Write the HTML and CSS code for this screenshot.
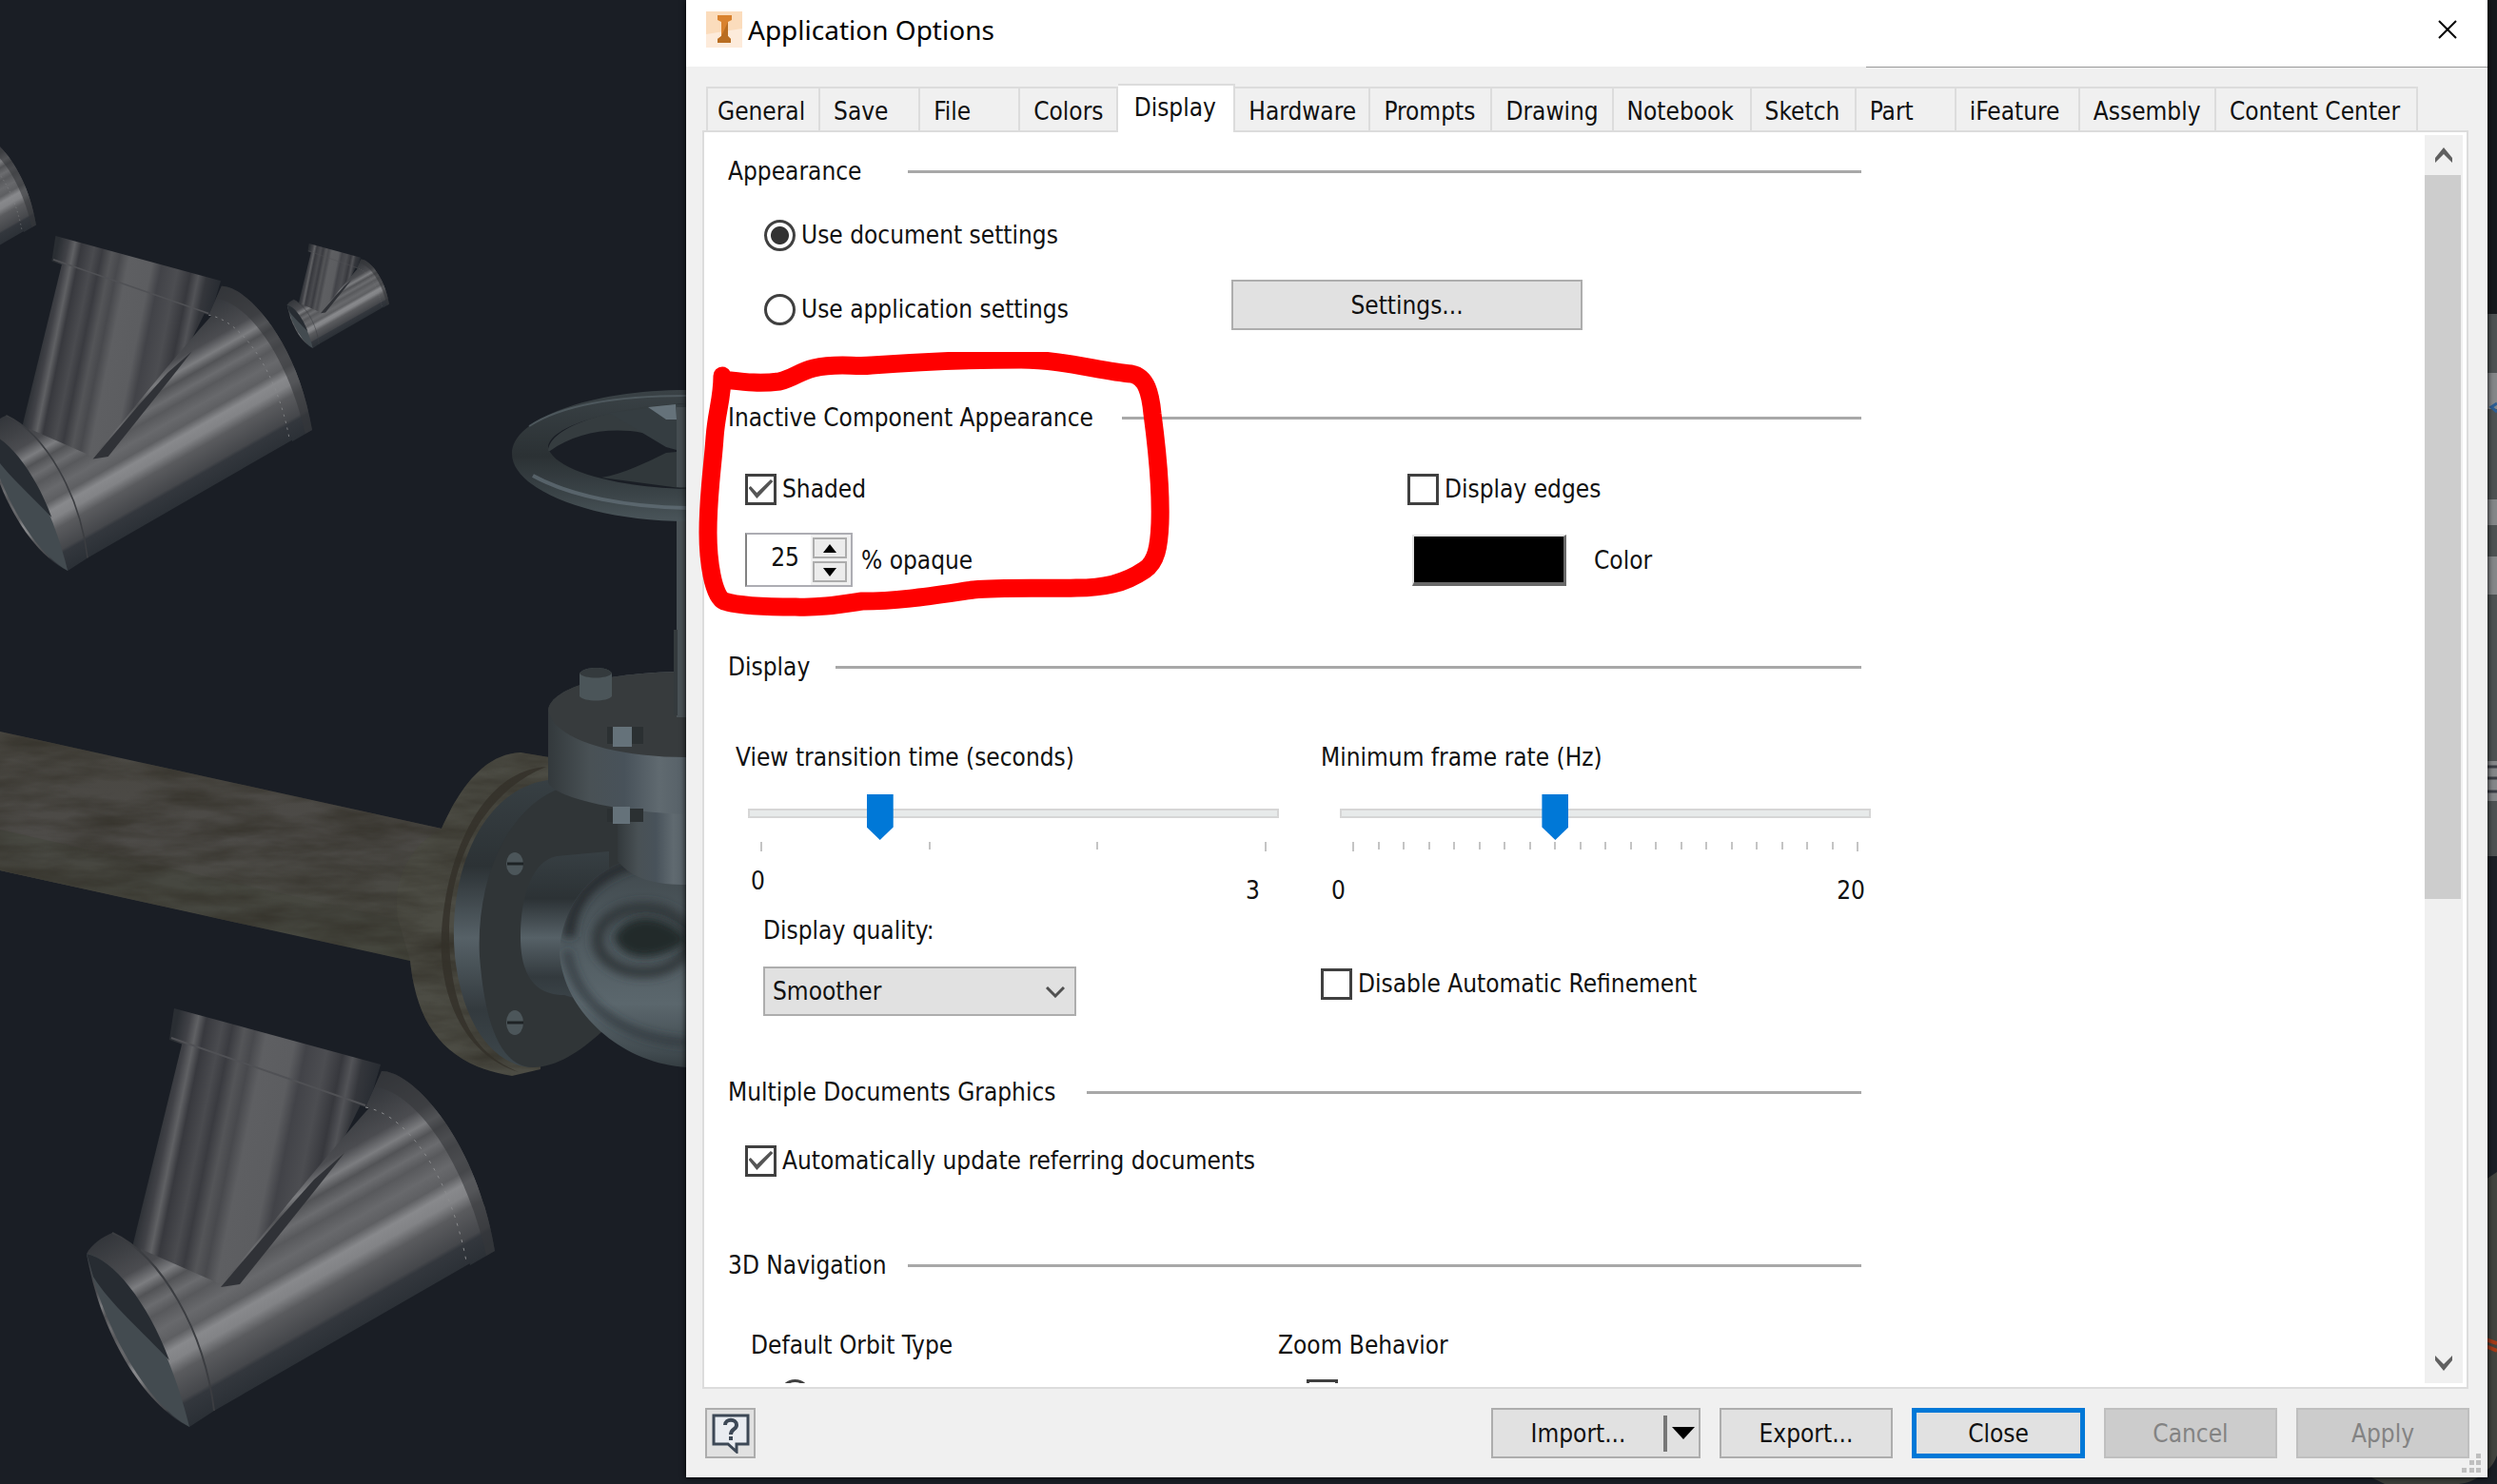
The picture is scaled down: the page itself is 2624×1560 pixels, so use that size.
FILE: index.html
```html
<!DOCTYPE html>
<html lang="en">
  <head>
    <meta charset="UTF-8" />
    <meta name="viewport" content="width=device-width, initial-scale=1.0" />
    <title>Application Options</title>
    <link rel="stylesheet" href="styles.css">
  </head>
  <body>
    <!-- 3D model view behind the dialog -->
    <svg class="scene" viewBox="0 0 2624 1560" preserveAspectRatio="xMinYMin slice" aria-hidden="true">
      <defs>
        <linearGradient id="run" gradientUnits="userSpaceOnUse" x1="290" y1="1190" x2="400" y2="1384">
          <stop offset="0" stop-color="#303338"></stop>
          <stop offset="0.14" stop-color="#3f4145"></stop>
          <stop offset="0.24" stop-color="#4b4c50"></stop>
          <stop offset="0.31" stop-color="#7c7d80"></stop>
          <stop offset="0.36" stop-color="#525356"></stop>
          <stop offset="0.42" stop-color="#6b6c6f"></stop>
          <stop offset="0.47" stop-color="#58595c"></stop>
          <stop offset="0.54" stop-color="#68696c"></stop>
          <stop offset="0.6" stop-color="#5e5f62"></stop>
          <stop offset="0.65" stop-color="#88898c"></stop>
          <stop offset="0.7" stop-color="#828386"></stop>
          <stop offset="0.76" stop-color="#5a5b5e"></stop>
          <stop offset="0.88" stop-color="#45474b"></stop>
          <stop offset="0.9" stop-color="#33373d"></stop>
          <stop offset="1" stop-color="#2b3036"></stop>
        </linearGradient>
        <linearGradient id="branch" gradientUnits="userSpaceOnUse" x1="160" y1="1200" x2="373" y2="1243">
          <stop offset="0" stop-color="#2a2e33"></stop>
          <stop offset="0.06" stop-color="#414247"></stop>
          <stop offset="0.1" stop-color="#606164"></stop>
          <stop offset="0.14" stop-color="#38393e"></stop>
          <stop offset="0.22" stop-color="#4a4b4f"></stop>
          <stop offset="0.27" stop-color="#3a3b40"></stop>
          <stop offset="0.33" stop-color="#545558"></stop>
          <stop offset="0.38" stop-color="#48494d"></stop>
          <stop offset="0.44" stop-color="#5e5f62"></stop>
          <stop offset="0.58" stop-color="#5c5d60"></stop>
          <stop offset="0.64" stop-color="#424348"></stop>
          <stop offset="0.74" stop-color="#4c4d51"></stop>
          <stop offset="0.82" stop-color="#37383d"></stop>
          <stop offset="0.87" stop-color="#525357"></stop>
          <stop offset="0.92" stop-color="#34363b"></stop>
          <stop offset="1" stop-color="#292d33"></stop>
        </linearGradient>
        <linearGradient id="rust" x1="0" y1="0" x2="0" y2="1">
          <stop offset="0" stop-color="#484640"></stop>
          <stop offset="0.45" stop-color="#4d4b48"></stop>
          <stop offset="1" stop-color="#45463d"></stop>
        </linearGradient>
        <linearGradient id="steel" x1="0" y1="0" x2="1" y2="0">
          <stop offset="0" stop-color="#33393c"></stop>
          <stop offset="0.3" stop-color="#495155"></stop>
          <stop offset="0.55" stop-color="#48525a"></stop>
          <stop offset="0.8" stop-color="#606a70"></stop>
          <stop offset="1" stop-color="#566067"></stop>
        </linearGradient>
        <linearGradient id="wheel" x1="0" y1="0" x2="0" y2="1">
          <stop offset="0" stop-color="#3a4246"></stop>
          <stop offset="0.5" stop-color="#2b3134"></stop>
          <stop offset="0.8" stop-color="#3b4448"></stop>
          <stop offset="1" stop-color="#4a555a"></stop>
        </linearGradient>
        <linearGradient id="rim" x1="0" y1="0" x2="0" y2="1">
          <stop offset="0" stop-color="#373f43"></stop>
          <stop offset="0.3" stop-color="#2c3235"></stop>
          <stop offset="0.55" stop-color="#566167"></stop>
          <stop offset="0.8" stop-color="#333a3e"></stop>
          <stop offset="1" stop-color="#3d474c"></stop>
        </linearGradient>
        <linearGradient id="ball" x1="0" y1="0" x2="0" y2="1">
          <stop offset="0" stop-color="#3b4347"></stop>
          <stop offset="0.3" stop-color="#4a5459"></stop>
          <stop offset="0.7" stop-color="#5b676d"></stop>
          <stop offset="0.9" stop-color="#424c51"></stop>
          <stop offset="1" stop-color="#2f373b"></stop>
        </linearGradient>
        <filter id="soft" x="-0.5" y="-0.5" width="2" height="2">
          <feGaussianBlur stdDeviation="5"></feGaussianBlur>
        </filter>
        <clipPath id="body">
          <path d="M722 892 C640 895 592 935 588 1000 C590 1060 650 1118 722 1122 Z"></path>
        </clipPath>
        <filter id="grain" x="0" y="0" width="1" height="1" color-interpolation-filters="sRGB">
          <feTurbulence type="fractalNoise" baseFrequency="0.012 0.05" numOctaves="4" seed="7"></feTurbulence>
          <feColorMatrix values="0 0 0 0 0.2  0 0 0 0 0.19  0 0 0 0 0.16  1.6 0 0 0 -0.5"></feColorMatrix>
          <feComposite in2="SourceGraphic" operator="in"></feComposite>
        </filter>
        <g id="wye">
          <path d="M139 1311 L192 1094 L380 1159 L345 1230 L232 1356 Z" fill="url(#branch)"></path>
          <path d="M183 1060 L400 1119 L392 1146 L384 1164 L178 1093 Z" fill="url(#branch)"></path>
          <path d="M180 1091 L384 1162" stroke="#505155" stroke-width="2" fill="none"></path>
          <path d="M148 1313 L232 1350 C285 1290 320 1240 401 1150 C440 1172 480 1240 494 1328 L225 1483 L150 1400 Z" fill="url(#run)"></path>
          <path d="M232 1353 L290 1285 L330 1240 L362 1212 L336 1245 L252 1350 Z" fill="#303237"></path>
          <path d="M401 1126 C432 1125 500 1195 520 1315 L494 1330 C478 1250 430 1170 384 1164 Z" fill="url(#run)"></path>
          <path d="M401 1126 C432 1125 500 1195 520 1315 L511 1320 C490 1225 440 1150 394 1142 Z" fill="#35373b" opacity="0.6"></path>
          <path d="M384 1164 C430 1172 474 1240 490 1326" stroke="#8c8d8f" stroke-width="1" stroke-dasharray="3 6" fill="none"></path>
          <path d="M91 1318 C96 1308 108 1300 118 1296 C170 1320 215 1400 225 1483 L199 1500 C150 1476 105 1400 91 1318 Z" fill="url(#run)"></path>
          <path d="M118 1296 C170 1320 215 1400 225 1483" stroke="#3b3d41" stroke-width="2" fill="none"></path>
          <path d="M91 1318 C120 1322 172 1390 199 1500 C155 1476 110 1400 91 1318 Z" fill="#434b50"></path>
          <path d="M91 1318 C118 1323 155 1368 178 1430 C150 1400 115 1370 98 1342 Z" fill="#272c32"></path>
        </g>
      </defs>

      <use href="#wye"></use>
      <use href="#wye" transform="translate(-88 -600) scale(0.8)"></use>
      <use href="#wye" transform="translate(279 -9) scale(0.25)"></use>
      <use href="#wye" transform="translate(-222 -421) scale(0.5)"></use>

      <!-- rusty pipe and flange -->
      <path d="M0 769 L464 871 L440 1012 L0 915 Z" fill="url(#rust)"></path>
      <path d="M0 872 L440 972 L435 1010 L0 915 Z" fill="#45463d" opacity="0.6"></path>
      <path d="M577 796 L547 791 C505 793 480 835 464 871 C430 890 412 925 418 965 L431 1010 C438 1080 470 1120 538 1131 L568 1124 Z" fill="#4c4c44"></path>
      <path d="M574 806 C500 835 455 930 478 1040 C490 1090 510 1112 545 1127 C490 1110 460 1050 464 980 C470 890 510 810 574 806 Z" fill="#38352e"></path>
      <g filter="url(#grain)">
        <path d="M0 769 L464 871 L440 1012 L0 915 Z"></path>
        <path d="M577 796 L547 791 C505 793 480 835 464 871 C430 890 412 925 418 965 L431 1010 C438 1080 470 1120 538 1131 L568 1124 Z"></path>
      </g>

      <!-- valve -->
      <path d="M576 820 C505 830 470 920 478 1005 C486 1080 520 1118 556 1122 L640 1060 V820 Z" fill="url(#rim)"></path>
      <path d="M590 828 C530 850 500 930 504 1005 C510 1085 530 1122 560 1122 C585 1122 610 1105 632 1085 L722 1060 V820 Z" fill="#303537"></path>
      <ellipse cx="541" cy="908" rx="9" ry="12" fill="#4c565a"></ellipse>
      <ellipse cx="541" cy="1075" rx="9" ry="13" fill="#4c565a"></ellipse>
      <path d="M533 908 H550 M533 1075 H550" stroke="#1e2325" stroke-width="3"></path>
      <path d="M585 900 C560 905 547 940 547 985 C547 1025 562 1046 593 1046 L640 1060 V895 Z" fill="url(#rim)"></path>
      <g clip-path="url(#body)">
        <path d="M580 880 H722 V1130 H580 Z" fill="url(#ball)"></path>
        <path d="M598 985 C600 930 650 900 722 900" fill="none" stroke="#262c2f" stroke-width="12" filter="url(#soft)"></path>
        <ellipse cx="676" cy="988" rx="48" ry="34" fill="none" stroke="#30373b" stroke-width="12" filter="url(#soft)"></ellipse>
        <path d="M722 986 C700 960 660 955 645 985 C655 1015 695 1010 722 990 Z" fill="#23292c" filter="url(#soft)"></path>
        <path d="M596 1000 C606 1060 660 1092 722 1096" fill="none" stroke="#2c3337" stroke-width="6" filter="url(#soft)"></path>
      </g>
      <path d="M649 850 H722 V930 C690 930 665 925 649 905 Z" fill="url(#steel)"></path>
      <path d="M576 746 C580 722 640 706 722 706 V856 C650 854 580 838 576 822 Z" fill="url(#steel)"></path>
      <path d="M576 746 C580 722 640 706 722 706 V796 C640 796 580 775 576 746 Z" fill="#373b3d"></path>
      <path d="M609 708 C613 700 640 700 643 708 V732 C638 738 614 738 609 732 Z" fill="#4b5559"></path>
      <path d="M609 708 C613 700 640 700 643 708 C638 714 614 714 609 708 Z" fill="#343a3d"></path>
      <path d="M638 764 H676 V782 H638 Z M638 850 H676 V864 H638 Z" fill="#2b3032"></path>
      <path d="M644 764 H664 V785 H644 Z M644 848 H662 V866 H644 Z" fill="#65727a"></path>
      <path d="M711 540 H722 V754 H711 Z" fill="#4a5256"></path>
      <path d="M708 662 H712 V752 H708 Z" fill="#343a3d"></path>
      <!-- hand wheel, cut off by the dialog -->
      <path fill-rule="evenodd" d="M722 410 C620 410 538 440 538 477 C538 514 620 548 722 548 Z M722 424 C640 430 578 448 576 470 C580 492 640 512 722 514 Z" fill="url(#wheel)"></path>
      <path d="M576 474 C578 448 640 428 722 424 V450 L700 462 C660 446 610 450 578 474 Z" fill="#353c3f"></path>
      <path d="M722 474 V514 L632 502 C655 498 680 486 700 476 Z" fill="#31383b"></path>
      <path d="M640 434 L700 470 L722 476 V424 Z" fill="#353d41"></path>
      <path d="M681 428 L710 425 L711 441 H700 Z" fill="#65727a"></path>
      <path d="M711 428 H722 V512 H711 Z" fill="#454d51"></path>
      <path d="M560 500 C600 522 660 533 722 534" fill="none" stroke="#65727a" stroke-width="4" opacity="0.7"></path>
      <path d="M556 448 C590 426 650 416 722 416" fill="none" stroke="#596469" stroke-width="2" opacity="0.7"></path>

      <!-- strip of the other panels along the right edge -->
      <path d="M2612 0 H2624 V330 H2612 Z" fill="#16191d"></path>
      <path d="M2612 330 H2624 V900 H2612 Z" fill="#4e5253"></path>
      <path d="M2612 392 H2624 V430 H2612 Z M2612 525 H2624 V552 H2612 Z M2612 585 H2624 V625 H2612 Z M2612 800 H2624 V842 H2612 Z" fill="#858789"></path>
      <path d="M2624 424 L2618 428 L2624 433" stroke="#2d5e94" stroke-width="3" fill="none"></path>
      <path d="M2612 806 H2624 M2612 818 H2624 M2612 832 H2624" stroke="#3a3d44" stroke-width="3"></path>
      <path d="M2612 1240 L2624 1232 V1530 C2620 1540 2616 1544 2612 1546 Z" fill="#43443f"></path>
      <path d="M2612 1408 L2624 1412 M2612 1415 L2624 1420" stroke="#a53a17" stroke-width="4"></path>
      <path d="M2490 1552 H2606 C2596 1558 2590 1560 2580 1560 H2506 Z" fill="#3c3e3a"></path>
    </svg>

    <main class="dialog">
      <header class="title-bar">
        <svg class="app-icon" viewBox="0 0 38 38" aria-hidden="true">
          <rect width="38" height="38" fill="#fbdcbc"></rect>
          <path d="M0 24 L38 18 V38 H0 Z" fill="#fdebdb"></path>
          <path d="M12 4 H27 V9 L23 11 V26 L26 29 V33 H12 V29 L16 26 V11 L12 9 Z" fill="#d9822f"></path>
          <path d="M23 11 V26 L26 29 V33 H12 V29 L16 26 Z" fill="#b96d22"></path>
        </svg>
        <h1 class="title">Application Options</h1>
        <button class="close-icon" type="button" aria-label="Close window">
          <svg viewBox="0 0 20 20"><path d="M1 1 L19 19 M19 1 L1 19" stroke="#000" stroke-width="2"></path></svg>
        </button>
      </header>

      <nav class="tabs">
        <button class="tab" type="button">General</button>
        <button class="tab" type="button">Save</button>
        <button class="tab" type="button">File</button>
        <button class="tab" type="button">Colors</button>
        <button class="tab active" type="button">Display</button>
        <button class="tab" type="button">Hardware</button>
        <button class="tab" type="button">Prompts</button>
        <button class="tab" type="button">Drawing</button>
        <button class="tab" type="button">Notebook</button>
        <button class="tab" type="button">Sketch</button>
        <button class="tab" type="button">Part</button>
        <button class="tab" type="button">iFeature</button>
        <button class="tab" type="button">Assembly</button>
        <button class="tab" type="button">Content Center</button>
      </nav>

      <div class="panel">
        <form class="options">
          <section class="group appearance">
            <h2 class="heading"><span class="heading-medium">Appearance</span></h2>
            <div class="appearance-row">
              <div class="radios">
                <label class="check"><input type="radio" name="appearance" checked />Use document settings</label>
                <label class="check"><input type="radio" name="appearance" />Use application settings</label>
              </div>
              <button class="button settings-button" type="button">Settings...</button>
            </div>
          </section>

          <section class="group inactive">
            <h2 class="heading"><span class="heading-widest">Inactive Component Appearance</span></h2>
            <div class="inactive-grid">
              <label class="check"><input type="checkbox" checked />Shaded</label>
              <label class="check"><input type="checkbox" />Display edges</label>
              <div class="field">
                <div class="spinner">
                  <input id="opaque" type="text" value="25" />
                  <div class="spinner-buttons">
                    <button type="button" aria-label="Increase"><svg viewBox="0 0 14 9"><path d="M7 0 L14 9 H0 Z"></path></svg></button>
                    <button type="button" aria-label="Decrease"><svg viewBox="0 0 14 9"><path d="M7 9 L14 0 H0 Z"></path></svg></button>
                  </div>
                </div>
                <label for="opaque">% opaque</label>
              </div>
              <div class="field color-field">
                <button id="edge-color" class="swatch" type="button"></button>
                <label for="edge-color">Color</label>
              </div>
            </div>
          </section>

          <section class="group display">
            <h2 class="heading"><span class="heading-narrow">Display</span></h2>
            <div class="display-grid">
              <div class="slider transition-slider">
                <label for="transition">View transition time (seconds)</label>
                <input id="transition" type="range" min="0" max="3" step="0.1" value="0.7" />
                <div class="ticks"><i></i><i></i><i></i><i></i></div>
                <div class="limits"><span class="limit-start">0</span><span>3</span></div>
              </div>
              <div class="slider">
                <label for="frame-rate">Minimum frame rate (Hz)</label>
                <input id="frame-rate" type="range" min="0" max="20" value="8" />
                <div class="ticks"><i></i><i></i><i></i><i></i><i></i><i></i><i></i><i></i><i></i><i></i><i></i><i></i><i></i><i></i><i></i><i></i><i></i><i></i><i></i><i></i><i></i></div>
                <div class="limits limits-wide"><span>0</span><span>20</span></div>
              </div>
              <div class="quality">
                <label for="quality">Display quality:</label>
                <div class="select">
                  <select id="quality">
                    <option>Smoother</option>
                  </select>
                  <svg viewBox="0 0 20 12" aria-hidden="true"><path d="M1 1 L10 10 L19 1" fill="none" stroke="#505050" stroke-width="3"></path></svg>
                </div>
              </div>
              <label class="check refinement"><input type="checkbox" />Disable Automatic Refinement</label>
            </div>
          </section>

          <section class="group graphics">
            <h2 class="heading"><span class="heading-wide">Multiple Documents Graphics</span></h2>
            <label class="check update"><input type="checkbox" checked />Automatically update referring documents</label>
          </section>

          <section class="group navigation">
            <h2 class="heading"><span class="heading-medium">3D Navigation</span></h2>
            <div class="navigation-grid">
              <div>
                <h3>Default Orbit Type</h3>
                <label class="check"><input type="radio" name="orbit" aria-label="Orbit type" /></label>
              </div>
              <div>
                <h3>Zoom Behavior</h3>
                <label class="check"><input type="checkbox" aria-label="Zoom behavior" /></label>
              </div>
            </div>
          </section>
        </form>

        <div class="scrollbar">
          <button type="button" aria-label="Scroll up"><svg viewBox="0 0 18 16"><path d="M0 11 L9 0 L18 11 V16 L9 7 L0 16 Z" fill="#606060"></path></svg></button>
          <div class="scroll-track"><div class="scroll-thumb"></div></div>
          <button type="button" aria-label="Scroll down"><svg viewBox="0 0 18 16"><path d="M0 5 L9 16 L18 5 V0 L9 9 L0 0 Z" fill="#606060"></path></svg></button>
        </div>
      </div>

      <footer class="footer">
        <button class="button help-button" type="button" aria-label="Help">
          <svg viewBox="0 0 40 42" aria-hidden="true">
            <path d="M2 2 H38 V32 H26 V40 L17 32 H2 Z" fill="#e9ecf1" stroke="#3d4856" stroke-width="3"></path>
            <path d="M14 12 C14 5 26 5 26 12 C26 17 20 16 20 22" fill="none" stroke="#3d4856" stroke-width="4"></path>
            <rect x="18" y="24" width="4" height="4" fill="#3d4856"></rect>
          </svg>
        </button>
        <div class="split-button">
          <button class="split-main" type="button">Import...</button>
          <button class="split-arrow" type="button" aria-label="Import choices"><svg viewBox="0 0 24 13"><path d="M0 0 H24 L12 13 Z"></path></svg></button>
        </div>
        <button class="button" type="button">Export...</button>
        <button class="button default" type="button">Close</button>
        <button class="button" type="button" disabled>Cancel</button>
        <button class="button" type="button" disabled>Apply</button>
      </footer>

      <svg class="grip" viewBox="0 0 20 20" aria-hidden="true">
        <path d="M15 0 h5 v5 h-5 Z M8 7 h5 v5 h-5 Z M15 7 h5 v5 h-5 Z M0 15 h5 v5 h-5 Z M8 15 h5 v5 h-5 Z M15 15 h5 v5 h-5 Z" fill="#bfbfbf"></path>
      </svg>

      <!-- freehand mark round the inactive component group -->
      <svg class="marker" viewBox="0 0 500 280" aria-hidden="true">
        <path d="M28 29 C47 31 65 34 88 31 C104 27 108 21 124 17 C150 11 165 16 185 14 C240 10 290 8 342 8 C385 8 425 20 458 23 C474 26 478 44 480 65 C486 110 489 150 488 180 C487 205 484 221 472 229 C450 244 428 248 400 248 C365 249 325 247 292 250 C250 256 215 262 175 262 C148 266 130 269 105 268 C80 268 45 267 30 262 C18 257 13 218 13 190 C13 150 18 120 20 90 C22 62 28 50 28 25"></path>
      </svg>
    </main>
  </body>
</html>
```

FILE: styles.css
```css
* {
  box-sizing: border-box;
}

body {
  margin: 0;
  height: 100vh;
  overflow: hidden;
  position: relative;
  background-color: #1a1e25;
  color: #111;
  font-family: "DejaVu Sans Condensed", "DejaVu Sans", sans-serif;
  font-size: 26px;
  line-height: 36px;
}

button,
input,
select {
  font: inherit;
  color: inherit;
  margin: 0;
  padding: 0;
}

h1,
h2,
h3 {
  margin: 0;
  font-size: inherit;
  font-weight: normal;
}

svg {
  display: block;
}

.scene {
  position: absolute;
  left: 0;
  top: 0;
  width: 100%;
  height: 100%;
}

.dialog {
  position: absolute;
  left: 721px;
  right: 10px;
  top: 0;
  bottom: 7px;
  display: flex;
  flex-direction: column;
  background: #f0f0f0;
  box-shadow: 0 0 6px #000;
}

/* Title bar */
.title-bar {
  display: flex;
  align-items: center;
  gap: 6px;
  height: 70px;
  padding: 0 31px 8px 21px;
  background: #fff;
}

.title-bar::after {
  content: "";
  position: absolute;
  top: 70px;
  right: 0;
  width: 653px;
  height: 1px;
  background: #999;
}

.app-icon {
  width: 38px;
  height: 38px;
}

.title {
  flex: 1;
  color: #000;
  font-family: "Noto Sans", sans-serif;
  font-size: 28px;
}

.close-icon {
  border: none;
  background: none;
}

.close-icon svg {
  width: 22px;
  height: 20px;
}

/* Tabs */
.tabs {
  display: grid;
  grid-template-columns: 120fr 105fr 105fr 103fr 123fr 142fr 128fr 127fr 145fr 110fr 105fr 130fr 143fr 212fr;
  align-items: end;
  padding: 18px 73px 0 21px;
}

.tab {
  height: 46px;
  padding: 4px 0 0 14px;
  border: 2px solid #dcdcdc;
  border-left-width: 0;
  border-bottom: none;
  background: #f0f0f0;
  text-align: left;
  white-space: nowrap;
}

.tab:first-child {
  border-left-width: 2px;
  padding-left: 10px;
}

.tab.active {
  height: 51px;
  margin-bottom: -2px;
  padding: 0 2px 4px 0;
  background: #fff;
  text-align: center;
  position: relative;
}

/* Panel */
.panel {
  flex: 1;
  min-height: 0;
  display: flex;
  justify-content: space-between;
  margin: 0 20px 0 17px;
  padding: 0 4px 4px 0;
  border: 2px solid #dcdcdc;
  background: #fff;
}

.options {
  flex: 1;
  max-width: 1240px;
  padding: 23px 24px 0 25px;
  overflow: hidden;
}

.heading {
  display: flex;
  align-items: center;
}

.heading::after {
  content: "";
  flex: 1;
  height: 3px;
  background: #a8a8a8;
}

.heading-narrow {
  width: 113px;
}

.heading-medium {
  width: 189px;
}

.heading-wide {
  width: 377px;
}

.heading-widest {
  width: 414px;
}

.check {
  display: flex;
  align-items: center;
  gap: 6px;
  height: 36px;
  white-space: nowrap;
}

.check input {
  appearance: none;
  flex: none;
  width: 33px;
  height: 33px;
  border: 3px solid #404040;
  background: #fff;
}

.check input[type="radio"] {
  border-radius: 50%;
}

.check input[type="radio"]:checked {
  background: radial-gradient(circle, #333 9px, #fff 10px);
}

.check input[type="checkbox"]:checked {
  display: grid;
  place-items: center;
}

.check input[type="checkbox"]:checked::after {
  content: "";
  width: 26px;
  height: 20px;
  background: #555;
  clip-path: polygon(0 45%, 9% 35%, 34% 70%, 90% 0, 100% 10%, 34% 100%);
}

.button,
.split-button {
  height: 53px;
  border: 2px solid #adadad;
  background: #e1e1e1;
}

.appearance-row {
  display: flex;
  align-items: flex-end;
  margin-top: 31px;
  padding-left: 38px;
}

.radios {
  display: flex;
  flex-direction: column;
  gap: 42px;
  width: 491px;
  padding-bottom: 4px;
}

.settings-button {
  width: 369px;
}

.inactive {
  margin-top: 74px;
}

.inactive-grid {
  display: grid;
  grid-template-columns: 696px 1fr;
  row-gap: 28px;
  margin-top: 39px;
  padding-left: 18px;
}

.field {
  display: flex;
  align-items: center;
  gap: 9px;
}

.spinner {
  display: flex;
  width: 113px;
  height: 57px;
  border: 2px solid #adadb3;
  border-left-color: #828282;
}

.spinner input {
  width: 67px;
  padding: 0 12px 6px 0;
  border: none;
  background: #fff;
  text-align: right;
}

.spinner-buttons {
  flex: 1;
  display: flex;
  flex-direction: column;
  gap: 3px;
  padding: 3px 4px 3px 2px;
  background: #f0f0f0;
}

.spinner-buttons button {
  flex: 1;
  display: grid;
  place-items: center;
  border: 2px solid #adadad;
  background: #ececec;
}

.spinner-buttons svg {
  width: 14px;
  height: 9px;
}

.color-field {
  gap: 29px;
  padding-left: 5px;
}

.swatch {
  width: 162px;
  height: 54px;
  border: 2px solid #e3e3e3;
  border-right: 3px solid #696969;
  border-bottom: 4px solid #696969;
  background: #000;
}

.display {
  margin-top: 66px;
}

.display-grid {
  display: grid;
  grid-template-columns: 615px 1fr;
  row-gap: 6px;
  margin-top: 59px;
  padding-left: 8px;
}

.slider {
  width: 578px;
}

.transition-slider {
  width: 571px;
}

.slider label,
.quality label {
  display: block;
}

.slider input {
  appearance: none;
  display: block;
  width: 558px;
  height: 40px;
  margin: 21px 0 10px auto;
  background: none;
}

.slider input::-webkit-slider-runnable-track {
  height: 10px;
  border: 2px solid #d6d6d6;
  background: #e7eaea;
}

.slider input::-webkit-slider-thumb {
  appearance: none;
  width: 28px;
  height: 48px;
  margin: -17px 0 0;
  background: #0078d7;
  clip-path: polygon(0 0, 100% 0, 100% 72%, 50% 100%, 0 72%);
}

.ticks {
  display: flex;
  justify-content: space-between;
  width: 532px;
  height: 10px;
  margin: 0 13px 0 auto;
}

.ticks i {
  width: 2px;
  height: 8px;
  background: #c4c4c4;
}

.ticks i:first-child,
.ticks i:last-child {
  height: 10px;
}

.limits {
  display: flex;
  justify-content: space-between;
  align-items: flex-end;
  height: 46px;
  margin-top: 13px;
  padding: 0 20px 0 16px;
}

.limit-start {
  align-self: flex-start;
}

.limits-wide {
  padding: 0 6px 0 11px;
}

.quality {
  padding-left: 29px;
}

.select {
  position: relative;
  width: 329px;
  margin-top: 20px;
}

.select select {
  appearance: none;
  width: 100%;
  height: 52px;
  padding-left: 8px;
  border: 2px solid #adadad;
  border-radius: 0;
  background: #e1e1e1;
}

.select svg {
  position: absolute;
  right: 12px;
  top: 21px;
  width: 20px;
  height: 12px;
  pointer-events: none;
}

.refinement {
  align-self: end;
  margin-bottom: 16px;
}

.graphics {
  margin-top: 62px;
}

.update {
  margin-top: 36px;
  padding-left: 18px;
}

.navigation {
  margin-top: 74px;
}

.navigation-grid {
  display: grid;
  grid-template-columns: 554px 1fr;
  margin-top: 48px;
  padding-left: 24px;
}

.navigation-grid .check {
  margin-top: 16px;
  padding-left: 30px;
}

/* Scrollbar */
.scrollbar {
  display: flex;
  flex-direction: column;
  width: 40px;
  margin-top: 3px;
  background: #f0f0f0;
}

.scrollbar button {
  display: grid;
  place-items: center;
  height: 42px;
  border: none;
  background: none;
}

.scrollbar svg {
  width: 18px;
  height: 16px;
}

.scroll-track {
  flex: 1;
}

.scroll-thumb {
  width: 38px;
  height: 62%;
  background: #cdcdcd;
}

/* Footer */
.footer {
  display: flex;
  gap: 20px;
  padding: 20px 19px 20px 20px;
}

.footer .button {
  width: 182px;
}

.footer .help-button {
  display: grid;
  place-items: center;
  width: 53px;
  margin-right: auto;
}

.help-button svg {
  width: 40px;
  height: 42px;
}

.footer .default {
  border: 5px solid #0078d7;
}

.footer .button:disabled {
  border-color: #bfbfbf;
  background: #ccc;
  color: #838383;
}

.split-button {
  display: flex;
  align-items: center;
  width: 220px;
}

.split-button button {
  border: none;
  background: none;
}

.split-main {
  flex: 1;
}

.split-button .split-arrow {
  display: grid;
  place-items: center;
  width: 37px;
  height: 38px;
  border-left: 4px solid #777;
}

.split-arrow svg {
  width: 24px;
  height: 13px;
}

.grip {
  position: absolute;
  right: 7px;
  bottom: 5px;
  width: 20px;
  height: 20px;
}

.marker {
  position: absolute;
  left: 10px;
  top: 370px;
  width: 500px;
  height: 280px;
  pointer-events: none;
}

.marker path {
  fill: none;
  stroke: #f00;
  stroke-width: 19;
  stroke-linecap: round;
  stroke-linejoin: round;
}
```
